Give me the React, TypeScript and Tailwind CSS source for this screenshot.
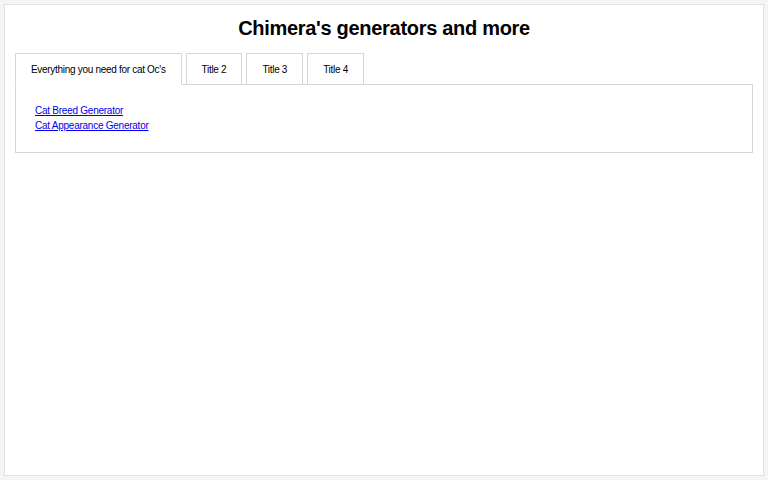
import { useState } from "react";

const TABS = ["Everything you need for cat Oc's", "Title 2", "Title 3", "Title 4"];

export default function App() {
  const [active, setActive] = useState(0);

  return (
    <div
      className="h-screen bg-[#f4f4f4] p-1"
      style={{ fontFamily: '"Liberation Sans", Arial, sans-serif' }}
    >
      <div className="h-full border border-[#e2e2e2] bg-white px-[10px] pt-[9px]">
        <h1 className="text-center text-[20px] font-bold leading-[28px] tracking-[-0.3px] text-black">
          Chimera's generators and more
        </h1>

        <div className="relative -mb-px mt-[11px] flex gap-[4px]">
          {TABS.map((t, i) => (
            <button
              key={t}
              type="button"
              onClick={() => setActive(i)}
              className={`h-[32px] border border-[#d6d6d6] bg-white px-[15px] text-[10px] tracking-[-0.3px] text-black ${
                i === active ? "border-b-white" : ""
              }`}
            >
              {t}
            </button>
          ))}
        </div>

        <div className="border border-[#d6d6d6] px-[19px] pt-[18px] pb-[19px] text-[10px] leading-[15px] tracking-[-0.25px]">
          {active === 0 && (
            <div className="flex flex-col">
              <a href="#" className="w-fit text-[#0000ee] underline">
                Cat Breed Generator
              </a>
              <a href="#" className="w-fit text-[#0000ee] underline">
                Cat Appearance Generator
              </a>
            </div>
          )}
        </div>
      </div>
    </div>
  );
}
